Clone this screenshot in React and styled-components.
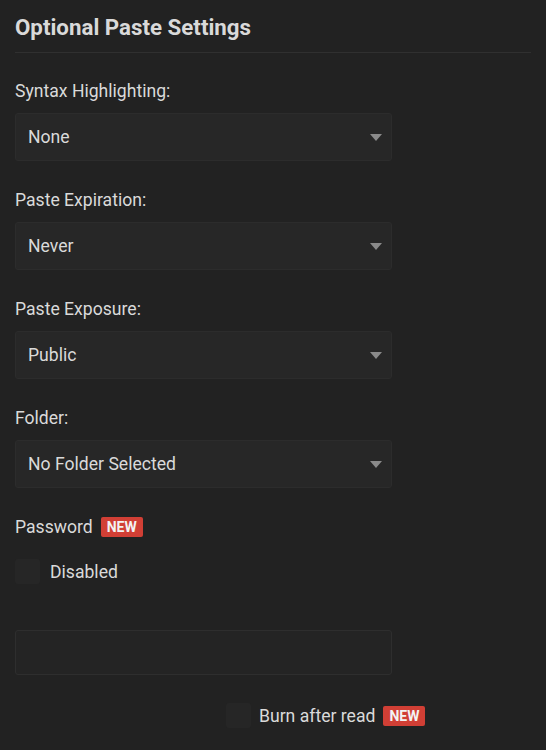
import React from "react";
import styled, { createGlobalStyle } from "styled-components";

const GlobalStyle = createGlobalStyle`
  html, body {
    margin: 0;
    background: #222222;
  }
  body {
    font-family: Roboto, "Liberation Sans", sans-serif;
    color: #dcdcdc;
  }
`;

const Page = styled.div`
  width: 546px;
  height: 750px;
  box-sizing: border-box;
  padding: 14px 15px 0 15px;
  background: #222222;
  overflow: hidden;
`;

const Title = styled.h2`
  margin: 0;
  font-size: 22.3px;
  line-height: 26px;
  font-weight: 700;
  color: #d9d9d9;
  padding-bottom: 12px;
  border-bottom: 1px solid #303030;
`;

const Form = styled.div`
  display: flex;
  flex-direction: column;
  padding-top: 28px;
`;

const Group = styled.div`
  display: flex;
  flex-direction: column;
  gap: 12px;
  margin-bottom: 29px;
`;

const Label = styled.div`
  display: flex;
  align-items: center;
  gap: 8px;
  font-size: 17.6px;
  line-height: 20px;
  color: #dadada;
`;

const Badge = styled.span`
  display: inline-block;
  background: #d13f35;
  color: #f3f3f3;
  font-size: 14px;
  font-weight: 700;
  line-height: 20px;
  padding: 0 6px;
  border-radius: 2px;
`;

const Select = styled.div`
  width: 377px;
  height: 48px;
  box-sizing: border-box;
  display: flex;
  align-items: center;
  justify-content: space-between;
  padding: 0 9px 0 12px;
  background: #272727;
  border: 1px solid #2c2c2c;
  border-radius: 3px;
  font-size: 17.6px;
  color: #dadada;
`;

const Arrow = () => (
  <svg width="12" height="7" viewBox="0 0 12 7">
    <path d="M0 0 L12 0 L6 7 Z" fill="#8a8a8a" />
  </svg>
);

const CheckRow = styled.div`
  display: flex;
  align-items: center;
  gap: ${(p) => p.gap}px;
  padding-left: ${(p) => p.indent || 0}px;
  margin-top: ${(p) => p.top}px;
  font-size: 17.6px;
  line-height: 20px;
  color: #dadada;
`;

const Box = styled.span`
  width: 25px;
  height: 25px;
  background: #262626;
  border-radius: 3px;
`;

const Input = styled.div`
  width: 377px;
  height: 45px;
  box-sizing: border-box;
  background: #242424;
  border: 1px solid #2e2e2e;
  border-radius: 3px;
  margin-top: 46px;
`;

const fields = [
  { label: "Syntax Highlighting:", value: "None" },
  { label: "Paste Expiration:", value: "Never" },
  { label: "Paste Exposure:", value: "Public" },
  { label: "Folder:", value: "No Folder Selected" },
];

export default function App() {
  return (
    <>
      <GlobalStyle />
      <Page>
        <Title>Optional Paste Settings</Title>
        <Form>
          {fields.map((f) => (
            <Group key={f.label}>
              <Label>{f.label}</Label>
              <Select>
                <span>{f.value}</span>
                <Arrow />
              </Select>
            </Group>
          ))}
          <Label>
            Password <Badge>NEW</Badge>
          </Label>
          <CheckRow gap={10} top={22}>
            <Box />
            Disabled
          </CheckRow>
          <Input />
          <CheckRow indent={211} gap={8} top={28}>
            <Box />
            Burn after read
            <Badge>NEW</Badge>
          </CheckRow>
        </Form>
      </Page>
    </>
  );
}
